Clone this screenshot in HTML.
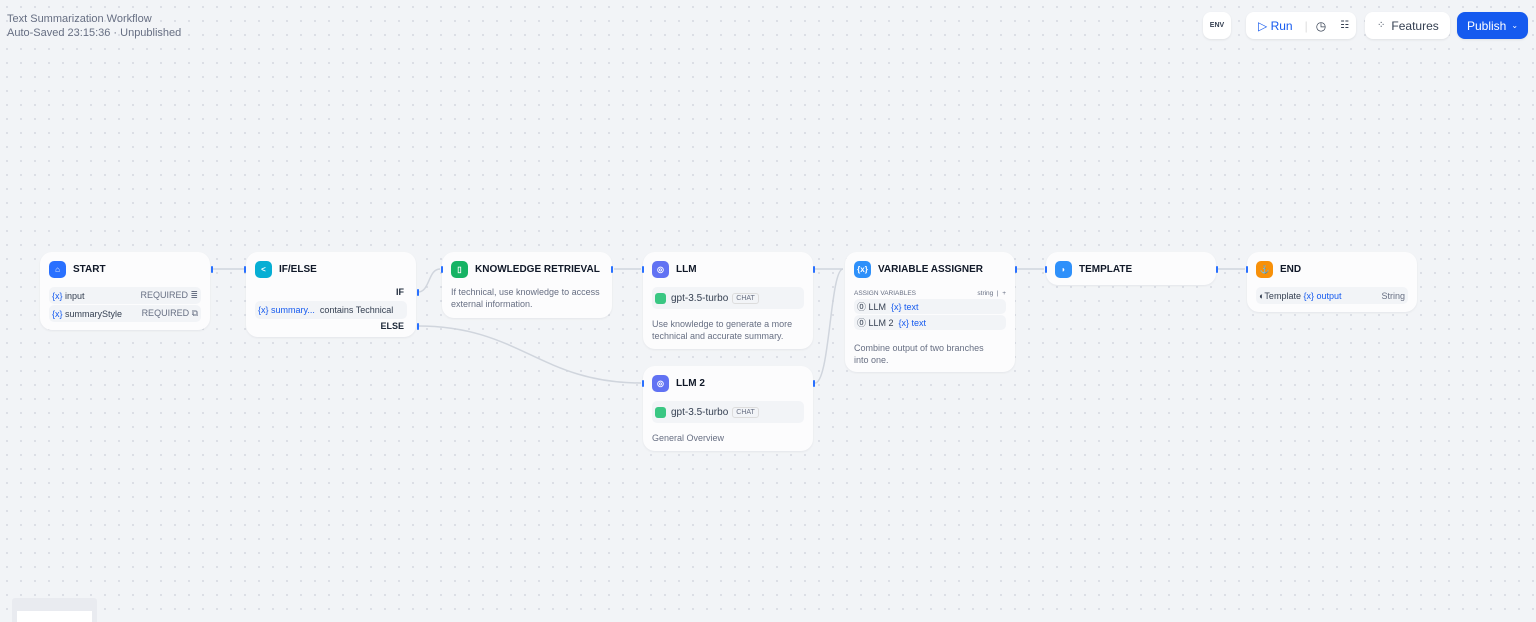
<!DOCTYPE html><html><head><meta charset="utf-8"><style>
*{box-sizing:border-box;margin:0;padding:0}
html,body{width:1536px;height:622px;overflow:hidden}
body{background:#f2f4f7;background-image:radial-gradient(#dadde4 1px,transparent 1.2px);background-size:14px 14px;font-family:"Liberation Sans",sans-serif;position:relative;color:#1d2939}
.n{position:absolute;background:#fcfcfd;border-radius:12px;box-shadow:0 1px 2px rgba(16,24,40,.06);width:170px}
.h{position:absolute;left:9px;top:9px;display:flex;align-items:center;font-weight:bold;font-size:10px;color:#101828}
.ic{width:17px;height:17px;border-radius:5px;margin-right:7px;display:flex;align-items:center;justify-content:center;color:#fff;font-size:8px}
.row{position:absolute;left:9px;right:9px;height:17px;background:#f2f4f7;border-radius:5px;font-size:9px;display:flex;align-items:center;padding:0 3px;color:#354052}
.v{color:#155aef}
.d{position:absolute;left:9px;right:9px;font-size:9px;color:#676f83;line-height:12px}
.hd{position:absolute;width:2px;height:7px;background:#2970ff;border-radius:1px}
.gray{color:#676f83}
.btn{position:absolute;top:12px;height:27px;background:#fff;border-radius:8px;box-shadow:0 1px 2px rgba(0,0,0,.08);display:flex;align-items:center;font-size:12px}
</style></head><body>
<div style="position:absolute;left:7px;top:12px;font-size:11px;color:#676f83;line-height:14px">Text Summarization Workflow<br>Auto-Saved 23:15:36 · Unpublished</div>
<div class="btn" style="left:1203px;width:28px;justify-content:center;font-size:7px;font-weight:bold;color:#354052">ENV</div>
<div class="btn" style="left:1246px;width:110px;color:#155aef"><span style="margin-left:12px">▷ Run</span><span style="margin-left:12px;color:#ddd">|</span><span style="margin-left:8px;color:#354052">◷</span><span style="margin-left:14px;color:#354052;font-size:10px">☷</span></div>
<div class="btn" style="left:1365px;width:85px;color:#354052"><span style="margin-left:12px;font-size:10px">⁘</span><span style="margin-left:6px">Features</span></div>
<div class="btn" style="left:1457px;width:71px;background:#155aef;color:#fff;padding-left:10px">Publish <span style="font-size:8px;margin-left:5px">⌄</span></div>

<svg style="position:absolute;left:0;top:0" width="1536" height="622"><g fill="none" stroke="#d0d5dd" stroke-width="1.5">
<path d="M212 269H244"/><path d="M418 292C430 292 428 269 440 269"/><path d="M418 326C520 326 540 383 641 383"/><path d="M614 269H641"/><path d="M815 269C830 269 830 269 843 269"/><path d="M815 383C830 383 830 269 843 269"/><path d="M1017 269H1044"/><path d="M1218 269H1245"/></g></svg>

<div class="n" style="left:40px;top:252px;height:78px"><div class="h"><div class="ic" style="background:#2970ff">⌂</div>START</div>
<div class="row" style="top:35px"><span class="v">{x}</span>&nbsp;input<span style="margin-left:auto" class="gray">REQUIRED ≣</span></div>
<div class="row" style="top:53px"><span class="v">{x}</span>&nbsp;summaryStyle<span style="margin-left:auto" class="gray">REQUIRED ⧉</span></div></div>
<div class="n" style="left:246px;top:252px;height:85px"><div class="h"><div class="ic" style="background:#06aed4">&lt;</div>IF/ELSE</div>
<div style="position:absolute;right:12px;top:35px;font-size:9px;font-weight:bold">IF</div>
<div class="row" style="top:49px;height:18px"><span class="v">{x} summary...</span>&nbsp;&nbsp;contains Technical</div>
<div style="position:absolute;right:12px;top:69px;font-size:9px;font-weight:bold">ELSE</div></div>
<div class="n" style="left:442px;top:252px;height:66px"><div class="h"><div class="ic" style="background:#16b364">▯</div>KNOWLEDGE RETRIEVAL</div>
<div class="d" style="top:34px">If technical, use knowledge to access external information.</div></div>
<div class="n" style="left:643px;top:252px;height:97px"><div class="h"><div class="ic" style="background:#6172f3">◎</div>LLM</div>
<div class="row" style="top:35px;height:22px;font-size:10px"><span style="width:11px;height:11px;border-radius:3px;background:#3ac783;margin-right:5px"></span>gpt-3.5-turbo<span style="font-size:7px;border:1px solid #ddd;border-radius:3px;padding:1px 3px;margin-left:4px" class="gray">CHAT</span></div>
<div class="d" style="top:66px">Use knowledge to generate a more technical and accurate summary.</div></div>
<div class="n" style="left:643px;top:366px;height:85px"><div class="h"><div class="ic" style="background:#6172f3">◎</div>LLM 2</div>
<div class="row" style="top:35px;height:22px;font-size:10px"><span style="width:11px;height:11px;border-radius:3px;background:#3ac783;margin-right:5px"></span>gpt-3.5-turbo<span style="font-size:7px;border:1px solid #ddd;border-radius:3px;padding:1px 3px;margin-left:4px" class="gray">CHAT</span></div>
<div class="d" style="top:66px">General Overview</div></div>
<div class="n" style="left:845px;top:252px;height:120px"><div class="h"><div class="ic" style="background:#2e90fa">{x}</div>VARIABLE ASSIGNER</div>
<div style="position:absolute;left:9px;right:9px;top:38px;font-size:6.5px;color:#676f83;display:flex">ASSIGN VARIABLES<span style="margin-left:auto">string &nbsp;| &nbsp;+</span></div>
<div class="row" style="top:47px;height:15px;font-size:9px">⓪ LLM &nbsp;<span class="v">{x} text</span></div>
<div class="row" style="top:63px;height:15px;font-size:9px">⓪ LLM 2 &nbsp;<span class="v">{x} text</span></div>
<div class="d" style="top:90px;right:22px">Combine output of two branches into one.</div></div>
<div class="n" style="left:1046px;top:252px;height:33px"><div class="h"><div class="ic" style="background:#2e90fa">◗</div>TEMPLATE</div></div>
<div class="n" style="left:1247px;top:252px;height:60px"><div class="h"><div class="ic" style="background:#f79009">⚓</div>END</div>
<div class="row" style="top:35px;font-size:9px">◐Template&nbsp;<span class="v">{x} output</span><span style="margin-left:auto" class="gray">String</span></div></div>

<div class="hd" style="left:211px;top:266px"></div><div class="hd" style="left:244px;top:266px"></div>
<div class="hd" style="left:417px;top:289px"></div><div class="hd" style="left:417px;top:323px"></div>
<div class="hd" style="left:441px;top:266px"></div><div class="hd" style="left:611px;top:266px"></div>
<div class="hd" style="left:642px;top:266px"></div><div class="hd" style="left:642px;top:380px"></div>
<div class="hd" style="left:813px;top:266px"></div><div class="hd" style="left:813px;top:380px"></div>
<div class="hd" style="left:1015px;top:266px"></div><div class="hd" style="left:1045px;top:266px"></div>
<div class="hd" style="left:1216px;top:266px"></div><div class="hd" style="left:1246px;top:266px"></div>
<div style="position:absolute;left:12px;top:598px;width:85px;height:24px;background:#e9ebf0;border-radius:3px 3px 0 0"></div>
<div style="position:absolute;left:17px;top:611px;width:75px;height:11px;background:#fff"></div>
</body></html>
